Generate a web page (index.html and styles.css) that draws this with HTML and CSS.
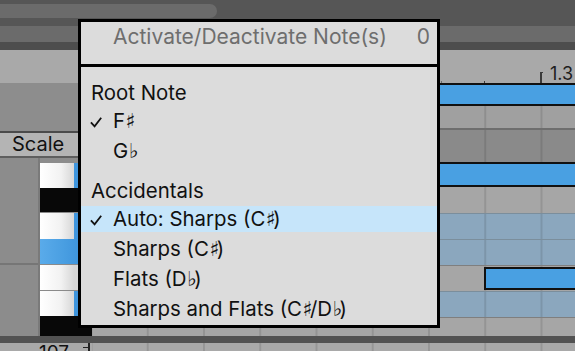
FILE: index.html
```html
<!DOCTYPE html>
<html>
<head>
<meta charset="utf-8">
<link rel="stylesheet" href="styles.css">
</head>
<body>
<div class="app">
  <div class="topbar"><div class="pill"></div></div>
  <div class="strip1"></div>
  <div class="strip2"></div>
  <div class="main">
    <div class="side">
      <div class="side-ruler"></div>
      <div class="side-space"></div>
      <div class="scale">Scale</div>
      <div class="keys-area">
        <div class="lcol"></div>
        <div class="keys">
          <div class="key white k1"><span class="strip"></span></div>
          <div class="key black k2"></div>
          <div class="key white k3 sep"><span class="strip"></span></div>
          <div class="key blue k4"></div>
          <div class="key white k5 sep"></div>
          <div class="key white k6 sep"><span class="strip"></span></div>
          <div class="key black k7"></div>
        </div>
      </div>
    </div>
    <div class="grid">
      <div class="ruler">
        <span class="tick t0"></span>
        <span class="tick t1"></span>
        <span class="tick t2"></span>
        <span class="bar-label">1.3</span>
      </div>
      <div class="note-row n1"></div>
      <div class="row r-gray"></div>
      <div class="row r-dark"></div>
      <div class="note-row n2"></div>
      <div class="row r-light"></div>
      <div class="row r-scale"></div>
      <div class="row r-scale"></div>
      <div class="row r-light r-withnote"><div class="note"></div></div>
      <div class="row r-scale"></div>
      <div class="row r-light r-last"></div>
    </div>
  </div>
  <div class="bottombar"></div>
  <div class="footer">
    <div class="foot-left"><span class="foot-num">107</span><span class="brk"></span></div>
    <div class="foot-grid"></div>
  </div>

  <div class="menu">
    <div class="menu-head">
      <span>Activate/Deactivate Note(s)</span>
      <span>0</span>
    </div>
    <div class="menu-body">
      <div class="section">
        <div class="label">Root Note</div>
        <div class="item"><span class="chk"><svg width="12" height="11" viewBox="0 0 12 11"><polyline points="0.9,5.3 4.6,9.4 11.2,0.8" fill="none" stroke="#111" stroke-width="1.8"/></svg></span><span>F<span class="acc">♯</span></span></div>
        <div class="item"><span class="chk"></span><span>G<span class="acc">♭</span></span></div>
      </div>
      <div class="section">
        <div class="label">Accidentals</div>
        <div class="item hl"><span class="chk"><svg width="12" height="11" viewBox="0 0 12 11"><polyline points="0.9,5.3 4.6,9.4 11.2,0.8" fill="none" stroke="#111" stroke-width="1.8"/></svg></span><span>Auto: Sharps (C<span class="acc">♯</span>)</span></div>
        <div class="item"><span class="chk"></span><span>Sharps (C<span class="acc">♯</span>)</span></div>
        <div class="item"><span class="chk"></span><span>Flats (D<span class="acc">♭</span>)</span></div>
        <div class="item"><span class="chk"></span><span>Sharps and Flats (C<span class="acc">♯</span>/D<span class="acc">♭</span>)</span></div>
      </div>
    </div>
  </div>
</div>
</body>
</html>
```
FILE: styles.css
```css
* { box-sizing: border-box; }
body { margin: 0; background: #555; font-family: Inter, "DejaVu Sans", sans-serif; }
.app { position: relative; width: 575px; height: 351px; overflow: hidden; display: flex; flex-direction: column; }

.topbar { height: 26px; flex: none; background: #565656; padding-top: 4px; }
.pill { width: 217px; height: 14px; background: #6b6b6b; border-radius: 0 7px 7px 0; }
.strip1 { height: 16px; flex: none; background: #6b6b6b; }
.strip2 { height: 8px; flex: none; background: #4d4d4d; }

.main { height: 286px; flex: none; display: flex; }
.side { width: 78px; flex: none; display: flex; flex-direction: column; }
.side-ruler { height: 33px; background: #a9a9a9; }
.side-space { height: 48px; background: #8d8d8d; }
.scale { height: 27px; background: #b4b4b4; border-top: 2px solid #4b4b4b; border-bottom: 2px solid #5e5e5e;
  font-size: 20px; line-height: 23px; padding-left: 12px; color: #111; }
.keys-area { flex: 1; display: flex; }
.lcol { width: 40px; flex: none; background: linear-gradient(#8c8c8c 0 105px, #767676 105px 107px, #8c8c8c 107px); border-right: 2px solid #7a7a7a; }
.keys { width: 38px; flex: none; padding-top: 5px; background: #8c8c8c; display: flex; flex-direction: column; }
.key { flex: none; display: flex; justify-content: flex-end; }
.white { background: linear-gradient(to right, #ffffff 0%, #f2f2f2 55%, #d6d6d6 90%, #d6d6d6 100%); }
.sep { border-top: 1px solid #8a8a8a; }
.strip { width: 4px; background: #3f95dd; }
.black { background: #080808; width: 52px; position: relative; z-index: 1; }
.blue { background: linear-gradient(to right, #5aabea, #4a9fe2 60%, #3f95dc); }
.k1 { height: 25px; }
.k2 { height: 24px; }
.k3 { height: 27px; }
.k4 { height: 25px; }
.k5 { height: 26px; }
.k6 { height: 26px; }
.k7 { height: 20px; }

.grid { flex: 1; display: flex; flex-direction: column; }
.ruler { height: 33px; flex: none; background: #a9a9a9; position: relative; }
.tick { position: absolute; background: #3a3a3a; width: 1px; }
.t0 { left: 363px; top: 31px; height: 2px; background: #6a6a6a; }
.t1 { left: 406px; top: 31px; height: 2px; }
.t2 { left: 462px; top: 22px; height: 11px; width: 2px; }
.t2::after { content: ""; position: absolute; left: 0; top: 0; width: 3px; height: 1px; background: #3a3a3a; }
.bar-label { position: absolute; left: 472px; top: 14px; font-size: 18px; line-height: 20px; color: #1e1e1e; }

.row, .note-row { flex: none; background-image: linear-gradient(to right, rgba(0,0,0,0.11) 2px, transparent 2px); background-size: 56.25px 100%; background-position: 12.5px 0; }
.note-row { background-color: #49a0e2; background-image: none; border-top: 2px solid #111; border-bottom: 2px solid #111; }
.n1 { height: 23px; }
.n2 { height: 25px; }
.r-gray { height: 24px; background-color: #a0a0a0; border-bottom: 2px solid #6e6e6e; }
.r-dark { height: 32px; background-color: #8a8a8a; }
.r-light { height: 26px; background-color: #a6a6a6; }
.r-scale { height: 26px; background-color: #8ba7be; border-top: 1px solid #7b8e9c; }
.r-withnote { border-top: 1px solid #7f7f7f; display: flex; padding: 1px 0; }
.r-last { height: 19px; border-top: 1px solid #7f7f7f; }
.note { margin-left: 406px; flex: 1; background: #49a0e2; border: 2px solid #111; border-right: none; }

.bottombar { height: 7px; flex: none; background: #525252; }
.footer { height: 8px; flex: none; display: flex; background: #a9a9a9; overflow: hidden; }
.foot-left { width: 92px; flex: none; display: flex; padding-left: 39px; }
.foot-num { font-size: 19px; line-height: 19px; color: #111; height: 8px; }
.brk { width: 7px; height: 8px; margin-left: 14px;
  background: linear-gradient(#222,#222) right top / 2px 100% no-repeat, linear-gradient(#222,#222) left 4px / 100% 1px no-repeat; }
.foot-grid { flex: 1; background-image: linear-gradient(to right, rgba(0,0,0,0.11) 2px, transparent 2px); background-size: 56.25px 100%; background-position: -1.5px 0; }

.menu { position: absolute; left: 78px; top: 19px; width: 362px; height: 309px; border: 3px solid #000; background: #dcdcdc; display: flex; flex-direction: column; z-index: 5; }
.menu-head { height: 45px; flex: none; border-bottom: 3px solid #000; display: flex; justify-content: space-between; align-items: flex-start;
  padding: 2px 7px 0 32px; font-size: 21px; line-height: 26px; color: #6e6e6e; }
.menu-body { padding-top: 13px; font-size: 20.4px; color: #111; }
.section + .section { margin-top: 14px; }
.label { height: 26px; line-height: 26px; padding-left: 10px; margin-bottom: 2px; }
.item { height: 26px; line-height: 26px; margin-bottom: 4px; display: flex; align-items: center; white-space: nowrap; }
.item.hl { background: #c6e5fa; }
.chk { width: 32px; flex: none; display: flex; padding-left: 9px; padding-top: 2px; }
.chk svg { display: block; }
.acc { font-family: "DejaVu Sans", sans-serif; font-weight: bold; font-size: 1em; letter-spacing: -2.5px; padding-left: 0.5px; }
```
